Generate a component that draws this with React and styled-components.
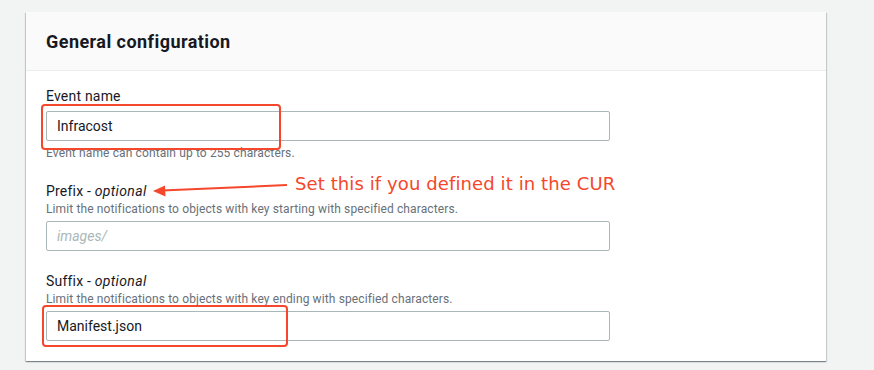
import React from "react";
import styled, { createGlobalStyle } from "styled-components";

const GlobalStyle = createGlobalStyle`
  body {
    margin: 0;
    background: #f2f3f3;
    font-family: Roboto, "Noto Sans", sans-serif;
    color: #16191f;
  }
`;

const Page = styled.div`
  padding: 12px 48px 9px 26px;
`;

const Card = styled.div`
  position: relative;
  width: 800px;
  background: #fff;
  box-shadow: 0 1px 1px 0 rgba(0, 28, 36, 0.3),
    1px 1px 1px 0 rgba(0, 28, 36, 0.15), -1px 1px 1px 0 rgba(0, 28, 36, 0.15);
`;

const Header = styled.div`
  height: 58px;
  display: flex;
  align-items: center;
  padding: 0 20px;
  background: #fafafa;
  border-bottom: 1px solid #eaeded;
  h2 {
    margin: 0;
    font-size: 18px;
    font-weight: 700;
    line-height: 22px;
    letter-spacing: 0.45px;
    padding-top: 1px;
  }
`;

const Body = styled.div`
  display: flex;
  flex-direction: column;
  gap: 20px;
  padding: 15px 20px 20px;
`;

const Field = styled.div`
  display: flex;
  flex-direction: column;
`;

const Label = styled.label`
  font-size: 14px;
  line-height: 20px;
  letter-spacing: 0.2px;
  margin-bottom: ${(p) => (p.$tight ? "0" : "5px")};
  i {
    font-style: italic;
    letter-spacing: 0.35px;
  }
`;

const Hint = styled.div`
  font-size: 12px;
  line-height: 16px;
  letter-spacing: 0.12px;
  color: #687078;
  margin: ${(p) => (p.$below ? "4px 0 0" : "0 0 4px")};
`;

const Input = styled.input`
  box-sizing: border-box;
  width: 564px;
  height: 30px;
  padding: 0 10px;
  border: 1px solid #aab7b8;
  border-radius: 2px;
  background: #fff;
  font-family: inherit;
  font-size: 14px;
  color: #16191f;
  outline: none;
  &::placeholder {
    color: #aab7b8;
    font-style: italic;
  }
`;

const Highlight = styled.div`
  position: absolute;
  left: ${(p) => p.$x}px;
  top: ${(p) => p.$y}px;
  width: ${(p) => p.$w}px;
  height: ${(p) => p.$h}px;
  box-sizing: border-box;
  border: 2px solid #f4472b;
  border-radius: 4px;
  pointer-events: none;
`;

const Arrow = styled.svg`
  position: absolute;
  left: 124px;
  top: 166px;
  overflow: visible;
`;

const Note = styled.div`
  position: absolute;
  left: 269px;
  top: 161px;
  font-family: "DejaVu Sans", Verdana, sans-serif;
  font-size: 18px;
  line-height: 22px;
  letter-spacing: 0.1px;
  color: #f4472b;
  white-space: nowrap;
`;

export default function App() {
  return (
    <>
      <GlobalStyle />
      <Page>
        <Card>
          <Header>
            <h2>General configuration</h2>
          </Header>
          <Body>
            <Field>
              <Label>Event name</Label>
              <Input defaultValue="Infracost" />
              <Hint $below>Event name can contain up to 255 characters.</Hint>
            </Field>
            <Field>
              <Label $tight>
                Prefix - <i>optional</i>
              </Label>
              <Hint>
                Limit the notifications to objects with key starting with
                specified characters.
              </Hint>
              <Input placeholder="images/" />
            </Field>
            <Field>
              <Label $tight>
                Suffix - <i>optional</i>
              </Label>
              <Hint>
                Limit the notifications to objects with key ending with
                specified characters.
              </Hint>
              <Input defaultValue="Manifest.json" />
            </Field>
          </Body>
          <Highlight $x={15} $y={92} $w={240} $h={46} />
          <Highlight $x={16} $y={293} $w={246} $h={42} />
          <Arrow width="140" height="20" viewBox="0 0 140 20">
            <line x1="137" y1="7" x2="12" y2="12.6" stroke="#f4472b" strokeWidth="2" />
            <path d="M3 13 L15 7.5 L15.5 18.5 Z" fill="#f4472b" />
          </Arrow>
          <Note>Set this if you defined it in the CUR</Note>
        </Card>
      </Page>
    </>
  );
}
